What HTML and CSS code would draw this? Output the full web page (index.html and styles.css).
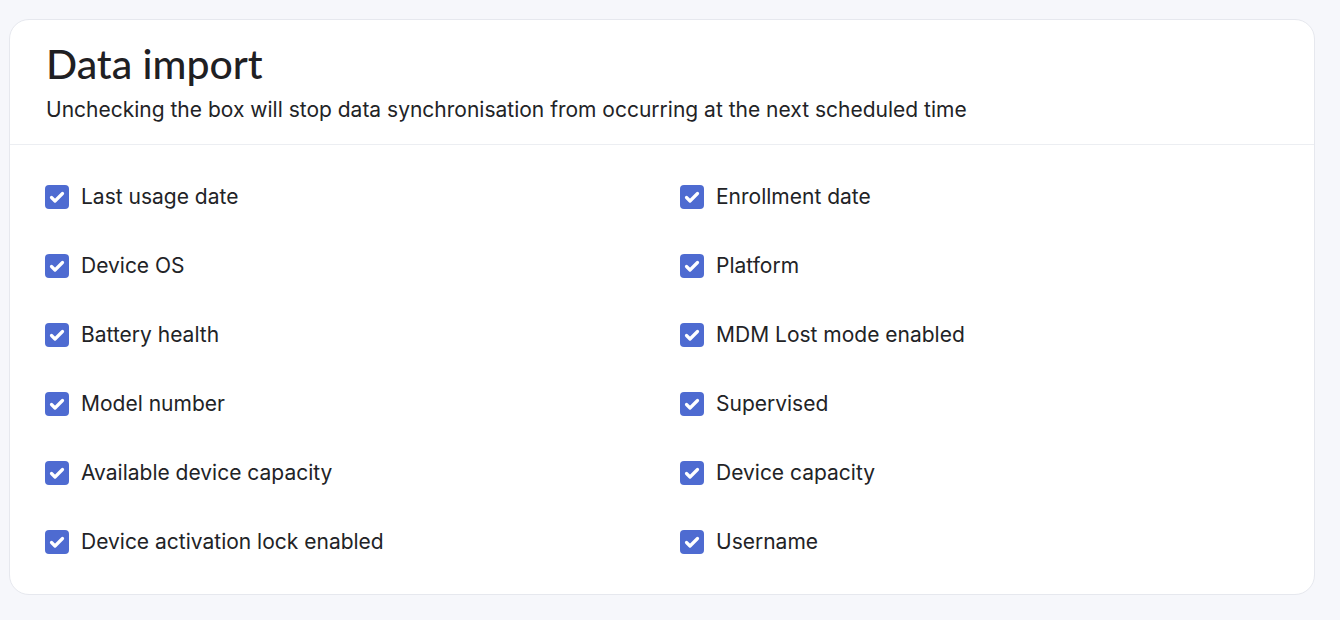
FILE: index.html
```html
<!DOCTYPE html>
<html lang="en">
<head>
    <meta charset="UTF-8">
    <title>Data import</title>
    <link rel="stylesheet" href="styles.css">
</head>
<body>
<div class="card">
    <div class="card-head">
        <h1 class="title">Data import</h1>
        <p class="subtitle">Unchecking the box will stop data synchronisation from occurring at the next scheduled time</p>
    </div>
    <div class="options">
        <label class="option"><input type="checkbox" checked><span class="box"><svg viewBox="0 0 24 24"><path d="M6.5 12.5l3.5 3.5 7.5-7.5"/></svg></span>Last usage date</label>
        <label class="option"><input type="checkbox" checked><span class="box"><svg viewBox="0 0 24 24"><path d="M6.5 12.5l3.5 3.5 7.5-7.5"/></svg></span>Enrollment date</label>
        <label class="option"><input type="checkbox" checked><span class="box"><svg viewBox="0 0 24 24"><path d="M6.5 12.5l3.5 3.5 7.5-7.5"/></svg></span>Device OS</label>
        <label class="option"><input type="checkbox" checked><span class="box"><svg viewBox="0 0 24 24"><path d="M6.5 12.5l3.5 3.5 7.5-7.5"/></svg></span>Platform</label>
        <label class="option"><input type="checkbox" checked><span class="box"><svg viewBox="0 0 24 24"><path d="M6.5 12.5l3.5 3.5 7.5-7.5"/></svg></span>Battery health</label>
        <label class="option"><input type="checkbox" checked><span class="box"><svg viewBox="0 0 24 24"><path d="M6.5 12.5l3.5 3.5 7.5-7.5"/></svg></span>MDM Lost mode enabled</label>
        <label class="option"><input type="checkbox" checked><span class="box"><svg viewBox="0 0 24 24"><path d="M6.5 12.5l3.5 3.5 7.5-7.5"/></svg></span>Model number</label>
        <label class="option"><input type="checkbox" checked><span class="box"><svg viewBox="0 0 24 24"><path d="M6.5 12.5l3.5 3.5 7.5-7.5"/></svg></span>Supervised</label>
        <label class="option"><input type="checkbox" checked><span class="box"><svg viewBox="0 0 24 24"><path d="M6.5 12.5l3.5 3.5 7.5-7.5"/></svg></span>Available device capacity</label>
        <label class="option"><input type="checkbox" checked><span class="box"><svg viewBox="0 0 24 24"><path d="M6.5 12.5l3.5 3.5 7.5-7.5"/></svg></span>Device capacity</label>
        <label class="option"><input type="checkbox" checked><span class="box"><svg viewBox="0 0 24 24"><path d="M6.5 12.5l3.5 3.5 7.5-7.5"/></svg></span>Device activation lock enabled</label>
        <label class="option"><input type="checkbox" checked><span class="box"><svg viewBox="0 0 24 24"><path d="M6.5 12.5l3.5 3.5 7.5-7.5"/></svg></span>Username</label>
    </div>
</div>
</body>
</html>
```

FILE: styles.css
```css
body {
    margin: 0;
    padding: 19px 25px 25px 9px;
    background: #f6f7fb;
    font-family: Inter, "Liberation Sans", sans-serif;
    color: #222326;
}
.card {
    background: #fff;
    border: 1px solid #e6e8ee;
    border-radius: 20px;
}
.card-head {
    padding: 20px 36px 22px 36px;
    border-bottom: 1px solid #eceef2;
}
.title {
    margin: 0;
    font-family: Lato, "Open Sans", sans-serif;
    font-weight: 500;
    font-size: 41px;
    line-height: 48px;
    color: #1f2023;
}
.subtitle {
    margin: 9px 0 0;
    font-size: 21px;
    line-height: 25px;
}
.options {
    display: grid;
    grid-template-columns: 635px 1fr;
    grid-auto-rows: 69px;
    padding: 17px 36px 18px 35px;
}
.option {
    display: flex;
    align-items: center;
    gap: 12px;
    font-size: 21px;
}
.option input {
    display: none;
}
.box {
    width: 24px;
    height: 24px;
    border-radius: 4px;
    background: #4e6bd1;
    display: flex;
}
.box svg {
    width: 24px;
    height: 24px;
    fill: none;
    stroke: #fff;
    stroke-width: 3.2;
    stroke-linecap: round;
    stroke-linejoin: round;
}
```
